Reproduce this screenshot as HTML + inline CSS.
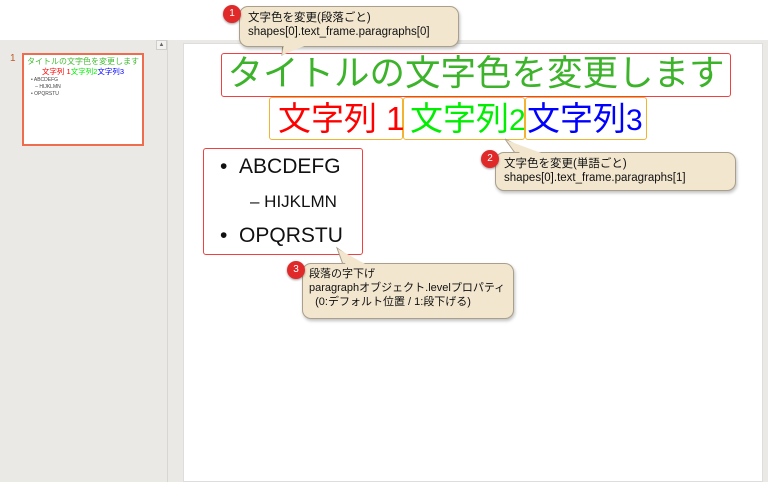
<!DOCTYPE html>
<html><head><meta charset="utf-8"><style>
*{margin:0;padding:0;box-sizing:border-box}
body{width:768px;height:482px;overflow:hidden;background:#fff;position:relative;font-family:"Liberation Sans","Noto Sans CJK JP",sans-serif}
.abs{position:absolute}
.bub{position:absolute;background:#f2e6cf;border:1px solid #a99f8c;border-radius:9px;font-size:11.5px;line-height:14px;color:#111;padding:3px 8px;box-shadow:1px 2px 3px rgba(0,0,0,.25);white-space:nowrap}
.num{position:absolute;width:18px;height:18px;border-radius:50%;background:#e02a2a;color:#fff;font-size:10px;text-align:center;line-height:18px;box-shadow:0 1px 2px rgba(0,0,0,.4)}
</style></head><body>
<div class="abs" style="left:0;top:40px;width:768px;height:442px;background:#ebe9e6"></div>
<div class="abs" style="left:167px;top:40px;width:1px;height:442px;background:#d8d6d3"></div>
<div class="abs" style="left:156px;top:40px;width:11px;height:10px;background:#f3f2f0;border:1px solid #d0cecb;font-size:6px;text-align:center;color:#666;line-height:8px">▲</div>
<div class="abs" style="left:10px;top:53px;font-size:10px;color:#c05a2a">1</div>
<div class="abs" style="left:22px;top:53px;width:122px;height:93px;background:#fff;border:2px solid #ee6d4e"></div>
<div class="abs" style="left:24px;top:57px;width:118px;text-align:center;font-size:8px;line-height:10px;color:#44bb33">タイトルの文字色を変更します</div>
<div class="abs" style="left:24px;top:67px;width:118px;text-align:center;font-size:7.5px;line-height:10px"><span style="color:#f00">文字列 1</span><span style="color:#0e0">文字列2</span><span style="color:#00f">文字列3</span></div>
<div class="abs" style="left:31px;top:77px;font-size:5px;line-height:7px;color:#444">• ABCDEFG<br>&nbsp;&nbsp;&nbsp;– HIJKLMN<br>• OPQRSTU</div>
<div class="abs" style="left:183px;top:43px;width:580px;height:439px;background:#fff;border:1px solid #ddd"></div>
<div class="abs" style="left:221px;top:53px;width:510px;height:44px;border:1.5px solid #f04040;border-radius:3px"></div>
<div class="abs" style="left:221px;top:52px;width:510px;text-align:center;font-size:35.5px;line-height:42px;color:#3cb32a;white-space:nowrap">タイトルの文字色を変更します</div>
<div class="abs" style="left:269px;top:97px;width:134px;height:43px;border:1.5px solid #f2b330;border-radius:3px"></div>
<div class="abs" style="left:403px;top:97px;width:122px;height:43px;border:1.5px solid #f2b330;border-radius:3px"></div>
<div class="abs" style="left:525px;top:97px;width:122px;height:43px;border:1.5px solid #f2b330;border-radius:3px"></div>
<div class="abs" style="left:278px;top:97px;font-size:33px;line-height:43px;white-space:nowrap"><span style="color:#f00">文字列 1</span></div>
<div class="abs" style="left:410px;top:97px;font-size:33px;line-height:43px;white-space:nowrap;color:#0e0">文字列<span style="font-size:30px">2</span></div>
<div class="abs" style="left:527px;top:97px;font-size:33px;line-height:43px;white-space:nowrap;color:#00f">文字列<span style="font-size:30px">3</span></div>
<div class="abs" style="left:203px;top:148px;width:160px;height:107px;border:1.5px solid #f04040;border-radius:3px"></div>
<div class="abs" style="left:220px;top:150px;font-size:21px;line-height:34px;color:#111;white-space:nowrap">•&nbsp;&nbsp;ABCDEFG<br><span style="font-size:17px;padding-left:30px">– HIJKLMN</span><br>•&nbsp;&nbsp;OPQRSTU</div>
<svg class="abs" style="left:0;top:0" width="768" height="482">
<polygon points="283,40 308,40 282,55" fill="#f2e6cf" stroke="#a99f8c"/>
<polygon points="520,160 545,160 505,139" fill="#f2e6cf" stroke="#a99f8c"/>
<polygon points="345,270 368,270 337,248" fill="#f2e6cf" stroke="#a99f8c"/>
</svg>
<div class="bub" style="left:239px;top:6px;width:220px;height:41px;padding-top:4px">文字色を変更(段落ごと)<br>shapes[0].text_frame.paragraphs[0]</div>
<div class="bub" style="left:495px;top:152px;width:241px;height:39px;padding-top:4px">文字色を変更(単語ごと)<br>shapes[0].text_frame.paragraphs[1]</div>
<div class="bub" style="left:302px;top:263px;width:212px;height:56px;padding:3px 6px;font-size:11px">段落の字下げ<br>paragraphオブジェクト.levelプロパティ<br>&nbsp;&nbsp;(0:デフォルト位置 / 1:段下げる)</div>
<svg class="abs" style="left:0;top:0" width="768" height="482">
<polygon points="284,45 307,45 282,55" fill="#f2e6cf"/>
<polygon points="521,154 544,154 506,140" fill="#f2e6cf"/>
<polygon points="346,265 367,265 338,249" fill="#f2e6cf"/>
</svg>
<div class="num" style="left:223px;top:5px">1</div>
<div class="num" style="left:481px;top:150px">2</div>
<div class="num" style="left:287px;top:261px">3</div>
</body></html>
